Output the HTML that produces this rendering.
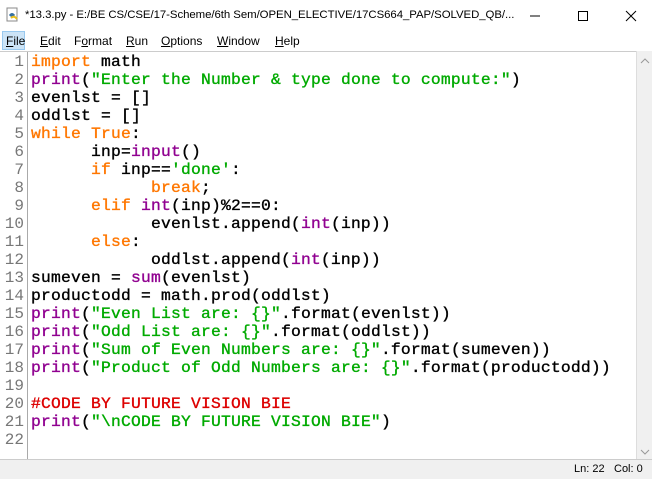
<!DOCTYPE html>
<html><head><style>
body{margin:0;width:652px;height:478px;background:#fff;font-family:"Liberation Sans",sans-serif;overflow:hidden;position:relative}
.title{position:absolute;top:0;left:0;width:652px;height:31px;background:#fff;font-size:11.4px;color:#000}
.title .t{position:absolute;left:25px;top:9px;white-space:nowrap;letter-spacing:-0.05px}
.menu{position:absolute;top:31px;left:0;width:652px;height:20px;font-size:12px}
.menu span{position:absolute;top:3px}
.ed{position:absolute;top:51px;left:0;width:636px;height:408px;border-top:1px solid #ccc}
.gut{position:absolute;left:0;top:0;width:27px;height:408px;border-right:1px solid #aaa;background:#fff}
pre{margin:0;font-family:"Liberation Mono",monospace;font-size:16px;line-height:18px;font-weight:normal;letter-spacing:0.2px;-webkit-text-stroke:0.35px}
.ln{position:absolute;top:1px;right:3px;text-align:right;color:#777;-webkit-text-stroke:0;letter-spacing:0}
.code{position:absolute;left:31px;top:1px;color:#000;transform:scaleX(1.02);transform-origin:0 0}
.k{color:#ff7700}.b{color:#900090}.s{color:#00aa00}.c{color:#dd0000}
.sb{position:absolute;left:636px;top:51px;width:16px;height:408px;background:#f0f0f0;border-left:1px solid #ddd}
.st{position:absolute;top:459px;left:0;width:652px;height:19px;background:#f0f0f0;border-top:1px solid #ccc;font-size:11px}
</style></head><body>
<div class="title">
<svg style="position:absolute;left:6px;top:7px" width="14" height="16"><rect x="1" y="1" width="10" height="13" fill="#fff" stroke="#888"/><path d="M3 8 q3 -4 6 0 q-3 4 -6 0" fill="#3670a0"/><path d="M5 11 q3 -3 6 1" stroke="#e8c020" stroke-width="2" fill="none"/></svg>
<span class="t">*13.3.py - E:/BE CS/CSE/17-Scheme/6th Sem/OPEN_ELECTIVE/17CS664_PAP/SOLVED_QB/...</span>
<svg style="position:absolute;left:530px;top:10px" width="110" height="12"><line x1="0" y1="6" x2="10" y2="6" stroke="#000"/><rect x="48.5" y="1.5" width="9" height="9" fill="none" stroke="#000"/><path d="M96 1 l10 10 M106 1 l-10 10" stroke="#000"/></svg>
</div>
<div class="menu">
<div style="position:absolute;left:2px;top:0;width:23px;height:19px;background:#cce4f7;border:1px solid #99c9ef;box-sizing:border-box"></div>
<span style="left:6px"><u>F</u>ile</span><span style="left:40px"><u>E</u>dit</span><span style="left:74px">F<u>o</u>rmat</span><span style="left:126px"><u>R</u>un</span><span style="left:161px"><u>O</u>ptions</span><span style="left:217px"><u>W</u>indow</span><span style="left:275px"><u>H</u>elp</span>
</div>
<div class="ed">
<div class="gut"><pre class="ln">1
2
3
4
5
6
7
8
9
10
11
12
13
14
15
16
17
18
19
20
21
22</pre></div>
<pre class="code"><span class="k">import</span> math
<span class="b">print</span>(<span class="s">"Enter the Number &amp; type done to compute:"</span>)
evenlst = []
oddlst = []
<span class="k">while</span> <span class="k">True</span>:
      inp=<span class="b">input</span>()
      <span class="k">if</span> inp==<span class="s">'done'</span>:
            <span class="k">break</span>;
      <span class="k">elif</span> <span class="b">int</span>(inp)%2==0:
            evenlst.append(<span class="b">int</span>(inp))
      <span class="k">else</span>:
            oddlst.append(<span class="b">int</span>(inp))
sumeven = <span class="b">sum</span>(evenlst)
productodd = math.prod(oddlst)
<span class="b">print</span>(<span class="s">"Even List are: {}"</span>.format(evenlst))
<span class="b">print</span>(<span class="s">"Odd List are: {}"</span>.format(oddlst))
<span class="b">print</span>(<span class="s">"Sum of Even Numbers are: {}"</span>.format(sumeven))
<span class="b">print</span>(<span class="s">"Product of Odd Numbers are: {}"</span>.format(productodd))

<span class="c">#CODE BY FUTURE VISION BIE</span>
<span class="b">print</span>(<span class="s">"\nCODE BY FUTURE VISION BIE"</span>)
</pre>
</div>
<div class="sb"><svg style="position:absolute;left:3px;top:6px" width="10" height="400"><path d="M1 6 l4 -4 l4 4" stroke="#999" fill="none"/><path d="M1 393 l4 4 l4 -4" stroke="#999" fill="none"/></svg></div>
<div class="st"><span style="position:absolute;left:574px;top:3px">Ln: 22</span><span style="position:absolute;left:614px;top:3px">Col: 0</span></div>
</body></html>
